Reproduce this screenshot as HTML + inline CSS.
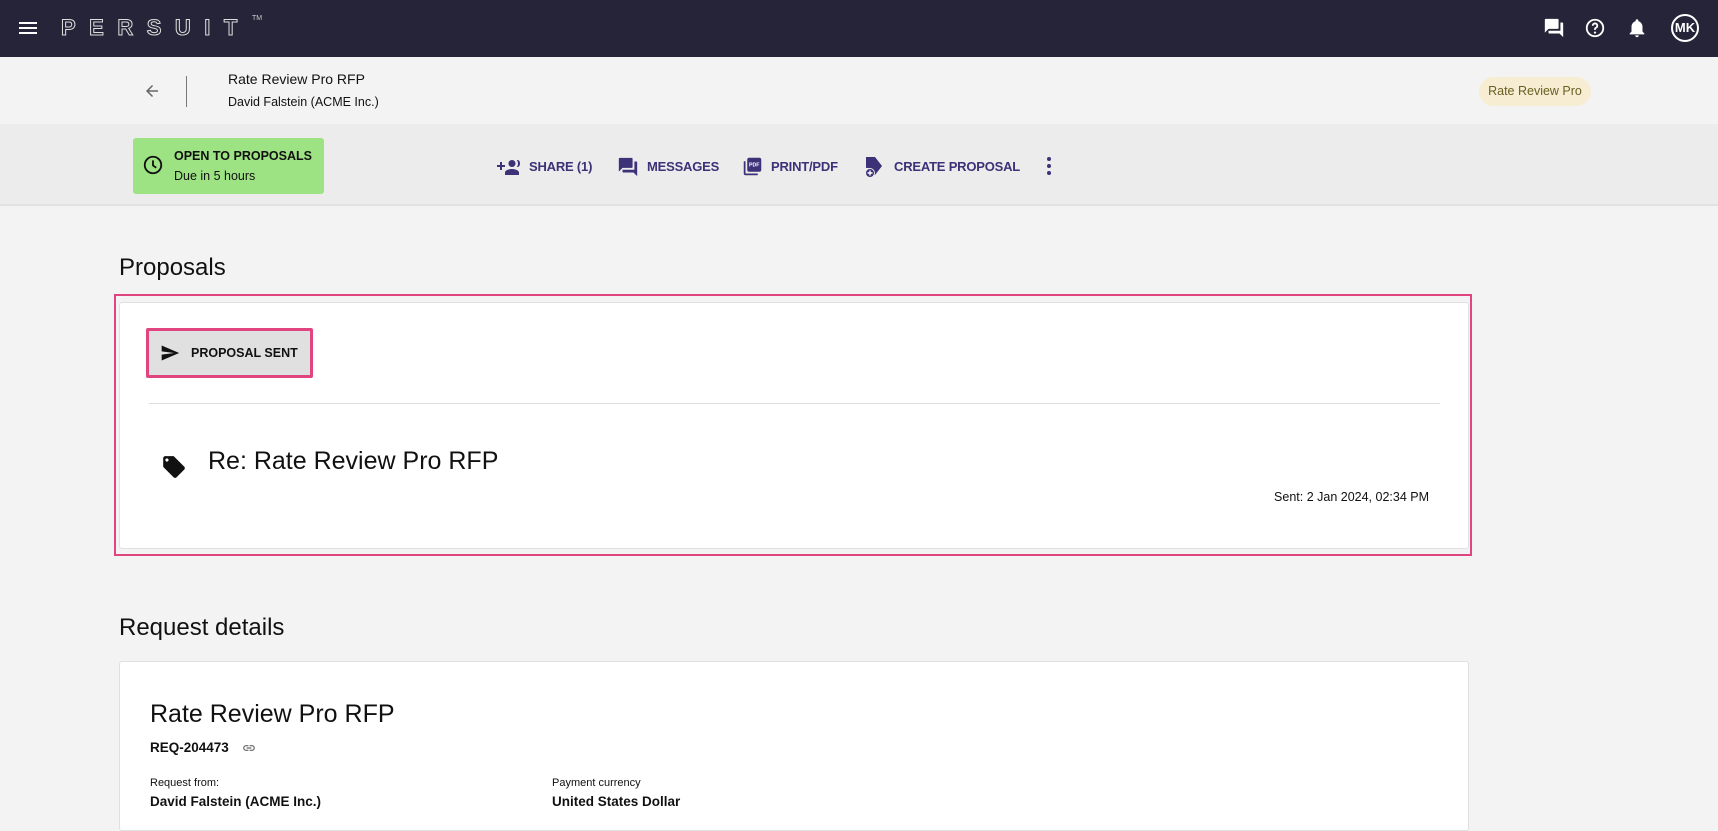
<!DOCTYPE html>
<html><head><meta charset="utf-8"><style>
*{margin:0;padding:0;box-sizing:border-box}
body{width:1718px;height:814px;overflow:hidden;background:#f3f3f3;font-family:"Liberation Sans",sans-serif;position:relative;color:#111}
.a{position:absolute;white-space:nowrap}
.top{left:0;top:0;width:1718px;height:57px;background:#262438;box-shadow:0 2px 4px rgba(0,0,0,.3)}
.hdr{left:0;top:57px;width:1718px;height:67px;background:#f3f3f3}
.bar{left:0;top:124px;width:1718px;height:82px;background:#ececec;border-bottom:2px solid #e2e2e2}
.act{color:#3d3177;font-weight:bold;font-size:13px;top:159px;letter-spacing:-.2px}
.card{background:#fff;border:1px solid #e0e0e0;border-radius:3px}
</style></head><body>
<div class="a top"></div>
<svg class="a" style="left:19px;top:19px" width="18" height="18" viewBox="0 0 18 18"><rect x="0" y="3" width="18" height="2" fill="#fff"/><rect x="0" y="8" width="18" height="2" fill="#fff"/><rect x="0" y="13" width="18" height="2" fill="#fff"/></svg>
<div class="a" style="left:61px;top:15px;font-size:22px;letter-spacing:13.5px;color:transparent;-webkit-text-stroke:1px #ddd;font-weight:bold">PERSUIT</div>
<div class="a" style="left:252px;top:15px;font-size:7px;color:#ccc">TM</div>
<svg class="a" style="left:1543px;top:17px" width="22" height="22" viewBox="0 0 24 24"><path fill="#fff" d="M21 6h-2v9H6v2c0 .55.45 1 1 1h11l4 4V7c0-.55-.45-1-1-1zm-4 6V3c0-.55-.45-1-1-1H3c-.55 0-1 .45-1 1v14l4-4h10c.55 0 1-.45 1-1z"/></svg>
<svg class="a" style="left:1584px;top:17px" width="22" height="22" viewBox="0 0 24 24"><circle cx="12" cy="12" r="9" fill="none" stroke="#fff" stroke-width="2"/><path d="M9.5 9.5a2.5 2.5 0 1 1 3.5 2.3c-.7.3-1 .8-1 1.5v.7" fill="none" stroke="#fff" stroke-width="2"/><circle cx="12" cy="17" r="1.2" fill="#fff"/></svg>
<svg class="a" style="left:1626px;top:17px" width="22" height="22" viewBox="0 0 24 24"><path fill="#fff" d="M12 22c1.1 0 2-.9 2-2h-4c0 1.1.9 2 2 2zm6-6v-5c0-3.07-1.630-5.64-4.5-6.32V4c0-.83-.67-1.5-1.5-1.5s-1.5.67-1.5 1.5v.68C7.64 5.36 6 7.920 6 11v5l-2 2v1h16v-1l-2-2z"/></svg>
<div class="a" style="left:1671px;top:14px;width:28px;height:28px;border:2px solid #fff;border-radius:50%;color:#fff;font-size:13px;font-weight:bold;text-align:center;line-height:24px">MK</div>

<div class="a hdr"></div>
<svg class="a" style="left:143px;top:82px" width="18" height="18" viewBox="0 0 24 24"><path fill="#666" d="M20 11H7.83l5.59-5.59L12 4l-8 8 8 8 1.41-1.41L7.83 13H20v-2z"/></svg>
<div class="a" style="left:186px;top:76px;width:1px;height:31px;background:#777"></div>
<div class="a" style="left:228px;top:71px;font-size:14px;color:#111">Rate Review Pro RFP</div>
<div class="a" style="left:228px;top:95px;font-size:12.5px;color:#111">David Falstein (ACME Inc.)</div>
<div class="a" style="left:1479px;top:77px;width:112px;height:29px;border-radius:15px;background:#f7edd2;color:#6b5e22;font-size:12.5px;text-align:center;line-height:29px">Rate Review Pro</div>

<div class="a bar"></div>
<div class="a" style="left:133px;top:138px;width:191px;height:56px;background:#9de283;border-radius:3px"></div>
<svg class="a" style="left:142px;top:154px" width="22" height="22" viewBox="0 0 24 24"><circle cx="12" cy="12" r="9" fill="none" stroke="#111" stroke-width="2"/><path d="M12 7v5.5l3.5 2.5" fill="none" stroke="#111" stroke-width="2"/></svg>
<div class="a" style="left:174px;top:149px;font-size:12.5px;font-weight:bold">OPEN TO PROPOSALS</div>
<div class="a" style="left:174px;top:169px;font-size:12.5px">Due in 5 hours</div>

<svg class="a" style="left:497px;top:157px" width="24" height="20" viewBox="0 0 24 20"><path fill="#3d3177" d="M5 8V5H3v3H0v2h3v3h2v-3h3V8H5zm10 2c2 0 3.5-1.6 3.5-3.5S17 3 15 3s-3.5 1.6-3.5 3.5S13 10 15 10zm0 2c-2.5 0-7 1.2-7 3.5V18h14v-2.5c0-2.3-4.5-3.5-7-3.5zm5.5-2c1.5 0 2.5-1.5 2.5-3.5S22 3 20.5 3c-.3 0-.5 0-.7.1.8.9 1.2 2.1 1.2 3.4s-.4 2.5-1.2 3.4c.2.1.4.1.7.1z"/></svg>
<div class="a act" style="left:529px">SHARE (1)</div>
<svg class="a" style="left:617px;top:156px" width="22" height="22" viewBox="0 0 24 24"><path fill="#3d3177" d="M21 6h-2v9H6v2c0 .55.45 1 1 1h11l4 4V7c0-.55-.45-1-1-1zm-4 6V3c0-.55-.45-1-1-1H3c-.55 0-1 .45-1 1v14l4-4h10c.55 0 1-.45 1-1z"/></svg>
<div class="a act" style="left:647px">MESSAGES</div>
<svg class="a" style="left:742px;top:156px" width="21" height="21" viewBox="0 0 24 24"><path fill="#3d3177" d="M20 2H8c-1.1 0-2 .9-2 2v12c0 1.1.9 2 2 2h12c1.1 0 2-.9 2-2V4c0-1.1-.9-2-2-2zM4 6H2v14c0 1.1.9 2 2 2h14v-2H4V6z"/><text x="14" y="12" font-size="6" fill="#fff" text-anchor="middle" font-family="Liberation Sans" font-weight="bold">PDF</text></svg>
<div class="a act" style="left:771px">PRINT/PDF</div>
<svg class="a" style="left:864px;top:155px" width="22" height="24" viewBox="0 0 22 24"><path fill="#3d3177" d="M2 2h9l7 9-7 9H9a6 6 0 0 0-7-7z"/><circle cx="6" cy="18" r="4.5" fill="#3d3177" stroke="#ececec" stroke-width="1"/><path d="M6 15.5v5M3.5 18h5" stroke="#fff" stroke-width="1.4"/></svg>
<div class="a act" style="left:894px">CREATE PROPOSAL</div>
<svg class="a" style="left:1045px;top:156px" width="8" height="20" viewBox="0 0 8 20"><circle cx="4" cy="3" r="2" fill="#3d3177"/><circle cx="4" cy="10" r="2" fill="#3d3177"/><circle cx="4" cy="17" r="2" fill="#3d3177"/></svg>

<div class="a" style="left:119px;top:254px;font-size:24px;color:#111">Proposals</div>
<div class="a" style="left:114px;top:294px;width:1358px;height:262px;border:2px solid #e0457f"></div>
<div class="a card" style="left:119px;top:302px;width:1350px;height:247px"></div>
<div class="a" style="left:146px;top:328px;width:167px;height:50px;border:3px solid #e0457f;border-radius:2px;background:#e0e0e0"></div>
<svg class="a" style="left:159px;top:343px" width="22" height="20" viewBox="0 0 24 24"><path fill="#111" d="M2 21l21-9L2 3v7l15 2-15 2z"/></svg>
<div class="a" style="left:191px;top:346px;font-size:12.5px;font-weight:bold">PROPOSAL SENT</div>
<div class="a" style="left:149px;top:403px;width:1291px;height:1px;background:#ddd"></div>
<svg class="a" style="left:161px;top:454px" width="26" height="26" viewBox="0 0 24 24"><path fill="#111" d="M21.4 11.6l-9-9C12.05 2.25 11.55 2 11 2H4c-1.1 0-2 .9-2 2v7c0 .55.22 1.05.59 1.42l9 9c.36.36.86.58 1.41.58.55 0 1.05-.22 1.41-.59l7-7c.37-.36.59-.86.59-1.41 0-.55-.23-1.060-.6-1.4zM5.5 7C4.67 7 4 6.33 4 5.5S4.67 4 5.5 4 7 4.67 7 5.5 6.33 7 5.5 7z"/></svg>
<div class="a" style="left:208px;top:447px;font-size:25px;color:#111">Re: Rate Review Pro RFP</div>
<div class="a" style="left:1266px;top:490px;width:163px;text-align:right;font-size:12.5px">Sent: 2 Jan 2024, 02:34 PM</div>

<div class="a" style="left:119px;top:614px;font-size:24px;color:#111">Request details</div>
<div class="a card" style="left:119px;top:661px;width:1350px;height:170px"></div>
<div class="a" style="left:150px;top:700px;font-size:25px;color:#111">Rate Review Pro RFP</div>
<div class="a" style="left:150px;top:740px;font-size:13.5px;font-weight:bold">REQ-204473</div>
<svg class="a" style="left:241px;top:741px" width="16" height="14" viewBox="0 0 24 24"><path fill="#666" d="M3.9 12c0-1.71 1.39-3.1 3.1-3.1h4V7H7c-2.76 0-5 2.24-5 5s2.24 5 5 5h4v-1.9H7c-1.71 0-3.1-1.39-3.1-3.1zM8 13h8v-2H8v2zm9-6h-4v1.9h4c1.71 0 3.1 1.39 3.1 3.1s-1.39 3.1-3.1 3.1h-4V17h4c2.76 0 5-2.24 5-5s-2.24-5-5-5z"/></svg>
<div class="a" style="left:150px;top:777px;font-size:11px">Request from:</div>
<div class="a" style="left:150px;top:794px;font-size:13.5px;font-weight:bold">David Falstein (ACME Inc.)</div>
<div class="a" style="left:552px;top:777px;font-size:11px">Payment currency</div>
<div class="a" style="left:552px;top:794px;font-size:13.5px;font-weight:bold">United States Dollar</div>
</body></html>
